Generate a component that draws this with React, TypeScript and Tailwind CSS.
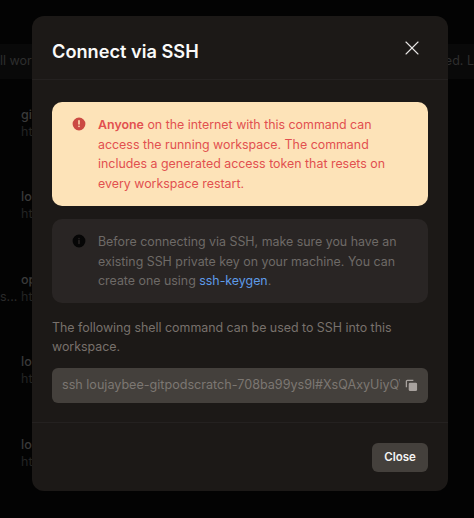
import { X } from "lucide-react";

const rows = [
  { name: "gi", left: "" },
  { name: "lo", left: "" },
  { name: "op", left: "s..." },
  { name: "lo", left: "" },
  { name: "lo", left: "" },
];

export default function App() {
  return (
    <div className="relative h-[518px] w-[474px] overflow-hidden bg-[#030303] font-['Inter','Liberation_Sans',sans-serif]">
      {/* page behind the dialog */}
      <div className="flex h-full flex-col">
        <div className="mt-[44px] flex h-[36px] items-center justify-between bg-[#090909] text-[12.5px] text-[#2e2e2e]">
          <span className="whitespace-nowrap">ll work</span>
          <span className="whitespace-nowrap">ed. L</span>
        </div>
        <div className="pt-[27px]">
          {rows.map((row, i) => (
            <div key={i} className="relative h-[82.500px] pl-[21px] text-[12.5px] leading-[17px]">
              <p className="font-medium text-[#3a3a3a]">{row.name}</p>
              <p className="text-[#232323]">ht</p>
              {row.left && <span className="absolute left-0 top-[17px] text-[#2a2a2a]">{row.left}</span>}
            </div>
          ))}
        </div>
      </div>

      {/* dialog */}
      <div className="absolute left-[32px] top-[16px] flex h-[475px] w-[416px] flex-col rounded-[12px] bg-[#1c1917]">
        <div className="flex h-[64px] shrink-0 items-center justify-between border-b border-[#242120] px-[20px]">
          <h2 className="pt-[7px] text-[18.2px] font-semibold leading-[24px] text-[#fafaf9]">Connect via SSH</h2>
          <X className="mr-[4px] size-[24px] text-[#e7e5e4]" strokeWidth={1.1} />
        </div>

        <div className="flex flex-1 flex-col px-[20px] pt-[22px]">
          <div className="flex rounded-[10px] bg-[#fde3b8] py-[13px] pl-[19px] pr-[16px] text-[12.4px] leading-[19.5px] text-[#e2504f]">
            <svg viewBox="0 0 20 20" className="mr-[11px] mt-[-1px] size-[16px] shrink-0 translate-y-[2px] fill-[#cb4a43]">
              <path fillRule="evenodd" clipRule="evenodd" d="M10 18a8 8 0 1 0 0-16 8 8 0 0 0 0 16Zm1-12a1 1 0 1 0-2 0v4a1 1 0 1 0 2 0V6Zm-1 8a1 1 0 1 0 0-2 1 1 0 0 0 0 2Z" />
            </svg>
            <p>
              <span className="font-semibold">Anyone</span> on the internet with this command can access the running workspace. The command includes a generated access token that resets on every workspace restart.
            </p>
          </div>

          <div className="mt-[13px] flex rounded-[10px] bg-[#292524] pb-[12.500px] pl-[19px] pr-[16px] pt-[13px] text-[12.4px] leading-[19.5px] text-[#6e6a67]">
            <svg viewBox="0 0 20 20" className="mr-[11px] mt-[-1px] size-[16px] shrink-0 translate-y-[2px] fill-[#060606]">
              <path fillRule="evenodd" clipRule="evenodd" d="M10 18a8 8 0 1 0 0-16 8 8 0 0 0 0 16Zm1-11a1 1 0 1 1-2 0 1 1 0 0 1 2 0Zm-2 2.500a1 1 0 0 1 2 0V13a1 1 0 1 1-2 0V9.500Z" />
            </svg>
            <p>
              Before connecting via SSH, make sure you have an existing SSH private key on your machine. You can create one using <span className="text-[#5e9be8]">ssh-keygen</span>.
            </p>
          </div>

          <p className="mt-[14.500px] text-[12.4px] leading-[19.5px] text-[#78716c]">
            The following shell command can be used to SSH into this workspace.
          </p>

          <div className="mt-[11.500px] flex h-[35px] shrink-0 items-center rounded-[6px] bg-[#44403c] pl-[10px] pr-[10px]">
            <span className="min-w-0 flex-1 overflow-hidden whitespace-nowrap text-[12.6px] text-[#7c7772]">
              ssh loujaybee-gitpodscratch-708ba99ys9l#XsQAxyUiyQ\
            </span>
            <svg viewBox="0 0 14 14" className="ml-[5px] size-[13px] shrink-0">
              <path d="M1.500 9V2.500a1 1 0 0 1 1-1H9" fill="none" stroke="#a8a29e" strokeWidth="1.400" />
              <rect x="4" y="4" width="9" height="9" rx="1.500" fill="#a8a29e" />
            </svg>
          </div>
        </div>

        <div className="flex h-[69px] shrink-0 items-start justify-end border-t border-[#242120] px-[20px] pt-[20px]">
          <button className="h-[29px] w-[56px] rounded-[6px] bg-[#44403c] text-[11.500px] font-semibold text-[#f5f5f4]">Close</button>
        </div>
      </div>
    </div>
  );
}
